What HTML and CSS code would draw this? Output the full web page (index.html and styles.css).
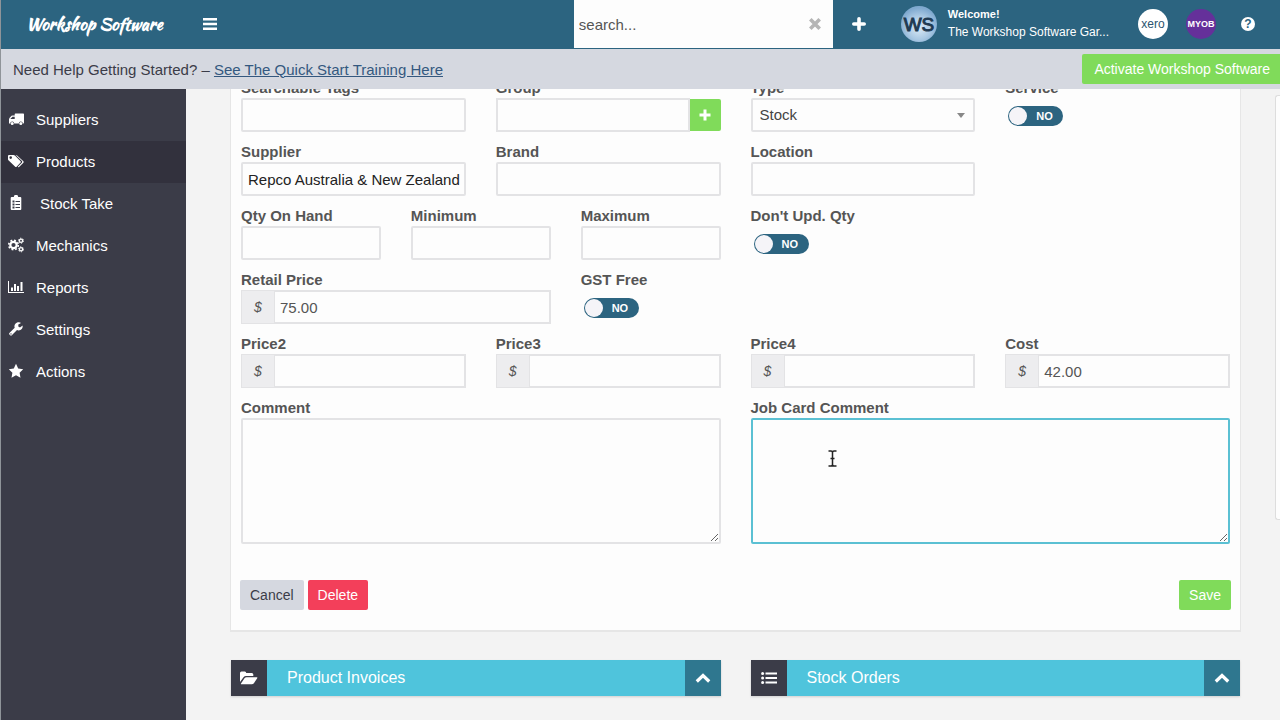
FILE: index.html
```html
<!DOCTYPE html>
<html lang="en">
<head>
    <meta charset="UTF-8">
    <meta name="viewport" content="width=device-width, initial-scale=1.0">
    <title>Workshop Software - Product</title>
    <link rel="stylesheet" href="styles.css">
</head>
<body>
    <header class="page-top">
        <div class="topbar">
            <a class="brand" href="#">Workshop Software</a>
            <button class="icon-btn" type="button" aria-label="Toggle menu">
                <svg width="14" height="12" viewBox="0 0 14 12"><path fill="currentColor" d="M0 0h14v2.4H0zM0 4.8h14v2.4H0zM0 9.6h14V12H0z"/></svg>
            </button>
            <form class="search">
                <input type="text" placeholder="search..." aria-label="Search">
                <button class="search-clear" type="reset" aria-label="Clear search">
                    <svg width="12" height="12" viewBox="0 0 12 12"><path stroke="currentColor" stroke-width="3.6" d="M1.3 1.3l9.4 9.4M10.7 1.3l-9.4 9.4"/></svg>
                </button>
            </form>
            <button class="icon-btn add-btn" type="button" aria-label="Add">
                <svg width="14" height="14" viewBox="0 0 14 14"><path stroke="currentColor" stroke-width="3.6" stroke-linecap="round" d="M7 1.8v10.4M1.8 7h10.4"/></svg>
            </button>
            <a class="account" href="#">
                <svg class="avatar" width="36" height="36" viewBox="0 0 36 36">
                    <defs>
                        <radialGradient id="ball" cx="50%" cy="60%" r="55%">
                            <stop offset="0" stop-color="#dcebf7"/>
                            <stop offset="0.6" stop-color="#a9c8e3"/>
                            <stop offset="1" stop-color="#7fa9cf"/>
                        </radialGradient>
                    </defs>
                    <circle cx="18" cy="18" r="18" fill="url(#ball)"/>
                    <text class="avatar-text" x="18" y="25" text-anchor="middle">WS</text>
                </svg>
                <span class="account-text">
                    <strong>Welcome!</strong>
                    <span>The Workshop Software Gar...</span>
                </span>
            </a>
            <a class="badge xero" href="#">xero</a>
            <a class="badge myob" href="#">MYOB</a>
            <a class="help" href="#" aria-label="Help">?</a>
        </div>
        <div class="helpbar">
            <p>Need Help Getting Started? – <a href="#">See The Quick Start Training Here</a></p>
            <button class="activate" type="button">Activate Workshop Software</button>
        </div>
    </header>

    <div class="layout">
        <nav class="sidebar">
            <a href="#">
                <svg viewBox="0 0 16 16"><path fill="currentColor" fill-rule="evenodd" d="M7.4 2.5h7.9q.7 0 .7.7v8.6q0 .7-.7.7h-.5a2 2 0 0 0-4 0H6.2a2 2 0 0 0-4 0H1v-4.300l.5-1.200 2-2.200q.4-.4 1-.4h2.200V3.200q0-.7.7-.7zM2.300 8h4.400V5.700H4.500z"/><circle cx="4.200" cy="12.600" r="1.500" fill="currentColor"/><circle cx="12.800" cy="12.600" r="1.500" fill="currentColor"/></svg>
                Suppliers
            </a>
            <a class="active" href="#">
                <svg viewBox="0 0 16 16"><path fill="currentColor" fill-rule="evenodd" d="M0 3q0-1 1-1h4.500q.8 0 1.400.6l5.700 5.600q.6.7 0 1.400l-4 4.100q-.7.600-1.400 0L.7 7.600Q0 7 0 6.200zm2.700.3a1.300 1.300 0 1 0 0 2.600 1.300 1.300 0 0 0 0-2.600z"/><path fill="currentColor" d="M7.500 2q1 0 1.600.6l6.300 5.700q.6.700 0 1.400l-4.300 4.200q-.7.500-1.300-.1l4.200-4.300q.5-.7-.1-1.400z"/></svg>
                Products
            </a>
            <a class="sub" href="#">
                <svg viewBox="0 0 16 16"><path fill="currentColor" fill-rule="evenodd" d="M3.700 2h2.100a2.200 2.200 0 0 1 4.400 0h2.100q1 0 1 1v11q0 1-1 1H3.700q-1 0-1-1V3q0-1 1-1zM4.500 5.500v2h2v-2zm3 .5v1H12V6zm-3 2.600v2h2v-2zm3 .5v1H12v-1zm-3 2.500v2h2v-2zm3 .5v1H12v-1z"/></svg>
                Stock Take
            </a>
            <a href="#">
                <svg viewBox="0 0 16 16" fill="none" stroke="currentColor"><circle cx="5.500" cy="8" r="3.200" stroke-width="2.200"/><circle cx="5.500" cy="8" r="4.800" stroke-width="1.600" stroke-dasharray="1.900 1.870"/><circle cx="13" cy="3.700" r="1.600" stroke-width="1.300"/><circle cx="13" cy="3.700" r="2.500" stroke-width="1" stroke-dasharray="1.300 1.318"/><circle cx="13" cy="12.300" r="1.600" stroke-width="1.300"/><circle cx="13" cy="12.300" r="2.500" stroke-width="1" stroke-dasharray="1.300 1.318"/></svg>
                Mechanics
            </a>
            <a href="#">
                <svg viewBox="0 0 16 16"><path fill="currentColor" d="M0 2h1v11h15v1H0zM3 8.500h2V12H3zM6 5h2v7H6zM9 7h2v5H9zM12.500 3h2v9h-2z"/></svg>
                Reports
            </a>
            <a href="#">
                <svg viewBox="0 0 16 16"><path fill="currentColor" fill-rule="evenodd" d="M14.600 4.500c.5 2.800-1.600 5-4.100 4.900q-.8 0-1.500-.3l-5.200 5.200q-.8.700-1.600 0l-.8-.8q-.7-.8 0-1.600l5.300-5.200C5.700 3.900 7.900 1.200 10.900 1.300q1.200 0 2.100.6L10.300 3.500v2l1.700 1zM3 12.200a.7.700 0 1 0 0 1.400.7.700 0 0 0 0-1.400z"/></svg>
                Settings
            </a>
            <a href="#">
                <svg viewBox="0 0 16 16"><path fill="currentColor" d="M8 .8l2.200 4.700 5 .7-3.600 3.500.9 5L8 12.300l-4.500 2.400.9-5L.8 6.200l5-.7z"/></svg>
                Actions
            </a>
        </nav>

        <main class="content">
            <form class="panel">
                <div class="form-grid">
                    <div class="field">
                        <label for="tags">Searchable Tags</label>
                        <input id="tags" type="text">
                    </div>
                    <div class="field">
                        <label for="group">Group</label>
                        <div class="input-group">
                            <input id="group" type="text">
                            <button class="group-add" type="button" aria-label="Add group">
                                <svg width="12" height="12" viewBox="0 0 12 12"><path stroke="currentColor" stroke-width="3" d="M6 .5v11M.5 6h11"/></svg>
                            </button>
                        </div>
                    </div>
                    <div class="field">
                        <label for="type">Type</label>
                        <div class="select-wrap">
                            <select id="type">
                                <option>Stock</option>
                                <option>Service</option>
                            </select>
                        </div>
                    </div>
                    <div class="field">
                        <label for="service">Service</label>
                        <span class="toggle"><input id="service" type="checkbox"><span>NO</span></span>
                    </div>

                    <div class="field">
                        <label for="supplier">Supplier</label>
                        <input id="supplier" class="picked" type="text" value="Repco Australia &amp; New Zealand">
                    </div>
                    <div class="field">
                        <label for="brand">Brand</label>
                        <input id="brand" type="text">
                    </div>
                    <div class="field">
                        <label for="location">Location</label>
                        <input id="location" type="text">
                    </div>

                    <div class="field small row-start">
                        <label for="qty">Qty On Hand</label>
                        <input id="qty" type="text">
                    </div>
                    <div class="field small">
                        <label for="minimum">Minimum</label>
                        <input id="minimum" type="text">
                    </div>
                    <div class="field small">
                        <label for="maximum">Maximum</label>
                        <input id="maximum" type="text">
                    </div>
                    <div class="field half">
                        <label for="noupdate">Don't Upd. Qty</label>
                        <span class="toggle"><input id="noupdate" type="checkbox"><span>NO</span></span>
                    </div>

                    <div class="field medium">
                        <label for="retail">Retail Price</label>
                        <div class="input-group">
                            <span class="addon">$</span>
                            <input id="retail" type="text" value="75.00">
                        </div>
                    </div>
                    <div class="field large">
                        <label for="gst">GST Free</label>
                        <span class="toggle"><input id="gst" type="checkbox"><span>NO</span></span>
                    </div>

                    <div class="field">
                        <label for="price2">Price2</label>
                        <div class="input-group">
                            <span class="addon">$</span>
                            <input id="price2" type="text">
                        </div>
                    </div>
                    <div class="field">
                        <label for="price3">Price3</label>
                        <div class="input-group">
                            <span class="addon">$</span>
                            <input id="price3" type="text">
                        </div>
                    </div>
                    <div class="field">
                        <label for="price4">Price4</label>
                        <div class="input-group">
                            <span class="addon">$</span>
                            <input id="price4" type="text">
                        </div>
                    </div>
                    <div class="field">
                        <label for="cost">Cost</label>
                        <div class="input-group">
                            <span class="addon">$</span>
                            <input id="cost" type="text" value="42.00">
                        </div>
                    </div>

                    <div class="field half">
                        <label for="comment">Comment</label>
                        <textarea id="comment"></textarea>
                    </div>
                    <div class="field half">
                        <label for="jobcomment">Job Card Comment</label>
                        <textarea id="jobcomment" class="focused"></textarea>
                        <svg class="pointer" width="9" height="17" viewBox="0 0 9 17"><path fill="none" stroke="#222" stroke-width="1.500" d="M.5 1H3q1.500 0 1.500 1.500v12Q4.500 16 3 16H.5M8.500 1H6Q4.500 1 4.500 2.500M8.500 16H6q-1.500 0-1.500-1.500M2.500 8.500h4"/></svg>
                    </div>
                </div>

                <div class="form-actions">
                    <button class="btn cancel" type="button">Cancel</button>
                    <button class="btn delete" type="button">Delete</button>
                    <button class="btn save" type="submit">Save</button>
                </div>
            </form>

            <div class="sections">
                <section class="section-bar">
                    <span class="section-icon">
                        <svg width="18" height="14" viewBox="0 0 18 14"><path fill="currentColor" d="M0 11V2Q0 .5 1.500.5h3.300q1.400 0 1.400 1.500h5.600q1.500 0 1.500 1.500V5H6Q4.500 5 3.500 6.200zM1 12.500l3.500-5.200Q5.200 6.200 6.500 6.200h10.300q1 0 .4 1l-3.300 5q-.8 1.100-2.200 1.100H1.500q-1 0-.5-.8z"/></svg>
                    </span>
                    <h2>Product Invoices</h2>
                    <button class="collapse" type="button" aria-label="Collapse product invoices">
                        <svg width="16" height="10" viewBox="0 0 16 10"><path fill="none" stroke="currentColor" stroke-width="3.200" d="M1.800 8.500L8 2.500l6.200 6"/></svg>
                    </button>
                </section>
                <section class="section-bar">
                    <span class="section-icon">
                        <svg width="16" height="12" viewBox="0 0 16 12"><path fill="currentColor" d="M4.500.5H16v2H4.500zM4.500 5H16v2H4.500zM4.500 9.500H16v2H4.500z"/><circle cx="1.600" cy="1.500" r="1.500" fill="currentColor"/><circle cx="1.600" cy="6" r="1.500" fill="currentColor"/><circle cx="1.600" cy="10.500" r="1.500" fill="currentColor"/></svg>
                    </span>
                    <h2>Stock Orders</h2>
                    <button class="collapse" type="button" aria-label="Collapse stock orders">
                        <svg width="16" height="10" viewBox="0 0 16 10"><path fill="none" stroke="currentColor" stroke-width="3.200" d="M1.800 8.500L8 2.500l6.200 6"/></svg>
                    </button>
                </section>
            </div>
        </main>

        <aside class="side-panel"></aside>
    </div>
</body>
</html>
```
FILE: styles.css
```css
* {
    box-sizing: border-box;
}

body {
    margin: 0;
    min-height: 100vh;
    display: flex;
    flex-direction: column;
    font-family: "Liberation Sans", Arial, sans-serif;
    font-size: 15px;
    color: #555;
    background: #f3f3f3;
    border-left: 1px solid #8f9499;
    overflow: hidden;
}

button {
    font-family: inherit;
    border: none;
    padding: 0;
    cursor: pointer;
}

svg {
    display: block;
    flex-shrink: 0;
}

/* Header */
.page-top {
    position: sticky;
    top: 0;
    z-index: 10;
}

.topbar {
    display: flex;
    align-items: center;
    height: 49px;
    padding-bottom: 1px;
    background: #2c6480;
    color: white;
}

.brand {
    width: 202px;
    padding-left: 25px;
    font-family: "Kaushan Script", "Liberation Serif", serif;
    font-size: 17px;
    font-weight: bold;
    white-space: nowrap;
    color: white;
    text-decoration: none;
}

.icon-btn {
    background: none;
    color: white;
}

.search {
    display: flex;
    align-items: center;
    width: 259px;
    height: 48px;
    margin-left: auto;
    padding-right: 12px;
    background: #fdfdfd;
}

.search input {
    flex: 1;
    min-width: 0;
    height: 48px;
    padding: 0 5px;
    border: none;
    outline: none;
    background: none;
    font-family: inherit;
    font-size: 15px;
    color: #555;
}

.search input::placeholder {
    color: #555;
}

.search-clear {
    background: none;
    color: #b5b5b5;
}

.add-btn {
    margin: 0 35px 0 19px;
}

.account {
    display: flex;
    align-items: center;
    gap: 11px;
    margin-right: 29px;
    color: white;
    text-decoration: none;
}

.avatar-text {
    font-size: 19px;
    fill: #1f3a52;
    stroke: #1f3a52;
}

.account-text {
    display: flex;
    flex-direction: column;
    padding-bottom: 2px;
    font-size: 12px;
    line-height: 18px;
    white-space: nowrap;
}

.account-text strong {
    font-size: 11px;
}

.badge {
    display: flex;
    align-items: center;
    justify-content: center;
    width: 30px;
    height: 30px;
    margin-right: 18px;
    border-radius: 50%;
    text-decoration: none;
}

.xero {
    background: white;
    color: #2c5570;
    font-size: 12px;
}

.myob {
    margin-right: 25px;
    background: #65309a;
    color: white;
    font-size: 9px;
    font-weight: bold;
}

.help {
    width: 14px;
    height: 14px;
    margin-right: 25px;
    border-radius: 50%;
    background: white;
    color: #2c6480;
    font-size: 12px;
    font-weight: bold;
    line-height: 14px;
    text-align: center;
    text-decoration: none;
}

.helpbar {
    display: flex;
    align-items: center;
    justify-content: space-between;
    height: 40px;
    padding-left: 12px;
    background: #d5d8e0;
    font-size: 15px;
    color: #3b3c48;
}

.helpbar p {
    margin: 0;
}

.helpbar a {
    color: #34587f;
}

.activate {
    height: 30px;
    padding: 0 10px 0 12px;
    border-radius: 2px 0 0 2px;
    background: #80db5a;
    color: white;
    font-size: 14px;
}

/* Page body */
.layout {
    flex: 1;
    display: flex;
}

.sidebar {
    width: 185px;
    flex-shrink: 0;
    padding-top: 10px;
    background: #3b3c48;
}

.sidebar a {
    display: flex;
    align-items: center;
    gap: 12px;
    height: 42px;
    padding: 0 0 2px 7px;
    color: white;
    text-decoration: none;
}

.sidebar a.active {
    background: #32313d;
}

.sidebar a.sub {
    gap: 16px;
}

.sidebar svg {
    width: 16px;
    height: 16px;
}

.content {
    flex: 1;
    min-width: 0;
    margin-top: -11px;
    padding: 0 34px 0 44px;
}

.side-panel {
    width: 5px;
    height: 425px;
    margin-top: 6px;
    flex-shrink: 0;
    border: 1px solid #ddd;
    border-right: none;
    border-radius: 3px 0 0 3px;
    background: #fdfdfd;
}

.panel {
    padding: 0 10px 20px;
    border: 1px solid #e6e6e6;
    border-top: none;
    border-bottom-width: 2px;
    background: #fdfdfd;
}

/* Form */
.form-grid {
    display: grid;
    grid-template-columns: repeat(12, minmax(0, 1fr));
    column-gap: 30px;
    row-gap: 10px;
}

.field {
    position: relative;
    grid-column: span 3;
}

.field.small {
    grid-column: span 2;
}

.field.row-start {
    grid-column: 1 / span 2;
}

.field.medium {
    grid-column: span 4;
}

.field.half {
    grid-column: span 6;
}

.field.large {
    grid-column: span 8;
}

.field label {
    display: block;
    height: 20px;
    line-height: 20px;
    font-weight: bold;
}

.field input[type="text"],
.field select,
.field textarea {
    display: block;
    width: 100%;
    height: 34px;
    padding: 0 3px 0 5px;
    border: 2px solid #e3e3e5;
    border-radius: 2px;
    outline: none;
    background: #fdfdfd;
    font-family: inherit;
    font-size: 15px;
    color: #555;
}

.field input.picked {
    color: #222;
}

.field textarea {
    height: 126px;
    resize: both;
}

.field textarea.focused {
    border-color: #5bc0d3;
}

.input-group {
    display: flex;
}

.field .input-group input {
    flex: 1;
    min-width: 0;
    border-radius: 0;
}

.field .addon + input {
    border-left: none;
}

.addon {
    width: 34px;
    height: 34px;
    flex-shrink: 0;
    border: 1px solid #e3e3e5;
    background: #ededef;
    line-height: 32px;
    text-align: center;
    font-size: 14px;
    font-style: italic;
}

.group-add {
    display: flex;
    align-items: center;
    justify-content: center;
    width: 31px;
    height: 32px;
    margin-top: 1px;
    border-radius: 0 2px 2px 0;
    background: #80db5a;
    color: white;
}

.select-wrap {
    position: relative;
}

.field .select-wrap select {
    appearance: none;
    padding: 0 7px 2px;
    color: #444;
}

.select-wrap::after {
    content: "";
    position: absolute;
    top: 15px;
    right: 10px;
    border: 4px solid transparent;
    border-top: 5px solid #888;
    border-bottom: none;
    pointer-events: none;
}

.toggle {
    display: flex;
    align-items: center;
    width: 55px;
    height: 20px;
    margin: 8px 3px 6px;
    border-radius: 10px;
    background: #2c6480;
    color: white;
    font-size: 11px;
    font-weight: bold;
}

.toggle input {
    appearance: none;
    width: 18px;
    height: 18px;
    margin: 0 9px 0 1px;
    border-radius: 50%;
    background: #f5f4f8;
    cursor: pointer;
}

.pointer {
    position: absolute;
    top: 52px;
    left: 77px;
}

.form-actions {
    display: flex;
    gap: 4px;
    margin: 36px -1px 0;
}

.btn {
    height: 30px;
    padding: 0 10px;
    border-radius: 2px;
    color: white;
    font-size: 14px;
}

.cancel {
    background: #d5d8e0;
    color: #3b3c48;
}

.delete {
    background: #f33f5a;
}

.save {
    margin-left: auto;
    background: #80db5a;
}

/* Collapsible sections */
.sections {
    display: grid;
    grid-template-columns: 1fr 1fr;
    gap: 30px;
    margin-top: 28px;
    padding: 0 1px;
}

.section-bar {
    display: flex;
    height: 36px;
    background: #4fc4dc;
    box-shadow: 0 1px 2px rgba(0,0,0,0.15);
    color: white;
}

.section-bar h2 {
    flex: 1;
    margin: 0;
    padding-left: 20px;
    font-size: 16px;
    font-weight: normal;
    line-height: 36px;
}

.section-icon,
.collapse {
    display: flex;
    align-items: center;
    justify-content: center;
    width: 36px;
    color: white;
}

.section-icon {
    background: #3b3c48;
}

.collapse {
    background: #2f778f;
}
```
